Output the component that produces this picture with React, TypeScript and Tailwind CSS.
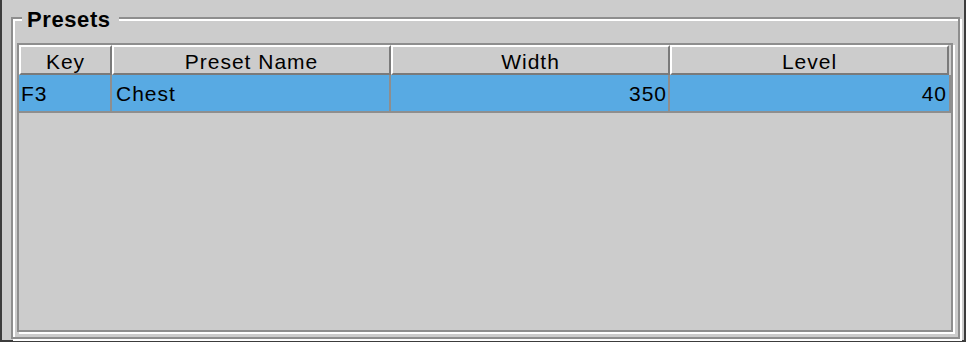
const columns = [
  { name: "Key", width: "w-[93px]" },
  { name: "Preset Name", width: "w-[279px]" },
  { name: "Width", width: "w-[279px]" },
  { name: "Level", width: "w-[279px]" },
];

const presets = [{ key: "F3", name: "Chest", width: 350, level: 40 }];

export default function App() {
  return (
    <div className="w-[975px] h-[350px] bg-white font-['Liberation_Sans',Arial,sans-serif] text-black">
      <div className="w-[966px] h-[342px] bg-[#cccccc] border-l-2 border-r-2 border-b-2 border-[#3c3c3c] pt-[17px] pl-[9px]">
        {/* titled group box */}
        <div className="relative w-[949px] h-[322px] border-2 border-[#8e8e8e] shadow-[inset_2px_2px_0_#ffffff,2px_2px_0_#ffffff] pt-[24px] pl-[4px]">
          <div className="absolute left-[9px] -top-[11px] bg-[#cccccc] pl-[5px] pr-[8px] text-[22px] font-bold leading-[24px] tracking-[0.6px]">
            Presets
          </div>

          {/* scroll pane */}
          <div className="w-[936px] h-[289px] border-2 border-[#8e8e8e] shadow-[2px_2px_0_#ffffff]">
            <div className="flex h-[30px]">
              {columns.map((c) => (
                <div
                  key={c.name}
                  className={`${c.width} h-full border-l-2 border-t-2 border-white border-r-2 border-b-2 border-r-[#7a7a7a] border-b-[#7a7a7a] flex items-center justify-center text-[21px] leading-none tracking-[1px] pt-[2px]`}
                >
                  {c.name}
                </div>
              ))}
            </div>

            {presets.map((p) => (
              <div key={p.key} className="flex h-[38px] bg-[#58aae3] border-b-2 border-[#8e8e8e] text-[21px] leading-none tracking-[1px]">
                <div className="w-[93px] border-r-2 border-[#8e8e8e] flex items-center pl-[2px]">{p.key}</div>
                <div className="w-[279px] border-r-2 border-[#8e8e8e] flex items-center pl-[4px]">{p.name}</div>
                <div className="w-[279px] border-r-2 border-[#8e8e8e] flex items-center justify-end pr-[1px]">{p.width}</div>
                <div className="w-[281px] border-r-2 border-[#8e8e8e] flex items-center justify-end pr-[2px]">{p.level}</div>
              </div>
            ))}
          </div>
        </div>
      </div>
    </div>
  );
}
